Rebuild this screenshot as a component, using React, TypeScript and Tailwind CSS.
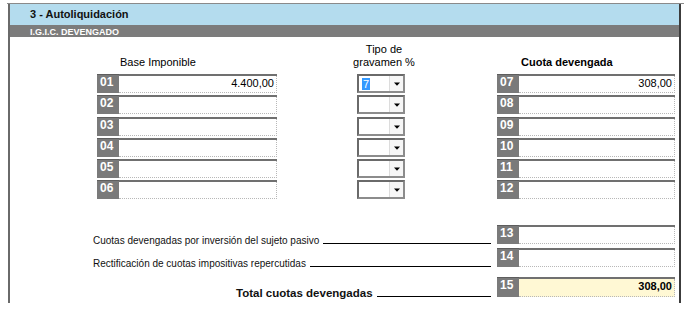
import React from "react";

const rowGaps = ["", "mt-[2px]", "mt-[3px]", "mt-[2px]", "mt-[2px]", "mt-[2px]"];

function Label({ n, h = "h-[19px]" }: { n: string; h?: string }) {
  return (
    <div className={`w-[22px] ${h} bg-[#7a7a7a] border-t border-[#5e5e5e] text-white font-bold text-[12px] leading-[13px] pl-[3px] pt-px`}>
      {n}
    </div>
  );
}

function Field({
  n,
  value,
  width,
  h = "h-[19px]",
  yellow = false,
  bold = false,
}: {
  n: string;
  value?: string;
  width: string;
  h?: string;
  yellow?: boolean;
  bold?: boolean;
}) {
  return (
    <div className={`flex ${h}`}>
      <Label n={n} h={h} />
      <div className={`${width} ${h} border-t-2 border-[#707070]`}>
        <div
          className={`h-full border-r border-b border-dotted border-[#b8b8b8] ${
            yellow ? "bg-[#fff8d4]" : "bg-white"
          } flex justify-end items-start pr-[2px] pt-px text-[11px] leading-[13px] ${
            bold ? "font-bold" : ""
          }`}
        >
          {value}
        </div>
      </div>
    </div>
  );
}

function Select({ value }: { value?: string }) {
  return (
    <div className="w-[48px] h-[19px] border-2 border-[#8c8c8c] border-t-[#6a6a6a] border-l-[#6a6a6a] flex bg-white">
      <div className="flex-1 flex items-center pl-[3px]">
        {value && (
          <span className="bg-[#3399ff] text-white text-[11px] leading-[12px] px-px">{value}</span>
        )}
      </div>
      <div className="w-[14px] border-l border-[#dcdcdc] bg-[#f6f6f6] flex items-center justify-center">
        <svg width="6" height="4" viewBox="0 0 6 4">
          <path d="M0 0.5h6L3 3.8z" fill="#000" />
        </svg>
      </div>
    </div>
  );
}

function LineRow({
  text,
  bold = false,
  pl = "",
  n,
  value,
  h = "h-[19px]",
  yellow = false,
}: {
  text: string;
  bold?: boolean;
  pl?: string;
  n: string;
  value?: string;
  h?: string;
  yellow?: boolean;
}) {
  return (
    <div className="flex items-end">
      <div className={`w-[398px] flex items-end ${pl}`}>
        <span
          className={`${
            bold ? "font-bold text-[11.5px] leading-[12px] -mb-[2px]" : "text-[10px] leading-[10px] -mb-[2px]"
          } text-[#111] whitespace-nowrap`}
        >
          {text}
        </span>
        <div className="flex-1 ml-[4px] h-px bg-black" />
      </div>
      <div className="ml-[6px]">
        <Field n={n} value={value} width="w-[156px]" h={h} yellow={yellow} bold={yellow} />
      </div>
    </div>
  );
}

export default function App() {
  const rows1 = [
    { n: "01", v: "4.400,00" },
    { n: "02" },
    { n: "03" },
    { n: "04" },
    { n: "05" },
    { n: "06" },
  ];
  const rows3 = [
    { n: "07", v: "308,00" },
    { n: "08" },
    { n: "09" },
    { n: "10" },
    { n: "11" },
    { n: "12" },
  ];
  return (
    <div className="w-[688px] h-[315px] bg-white overflow-hidden font-['Liberation_Sans',Arial,sans-serif] text-black">
      <div className="pt-[3px] pl-[7px]">
        <div className="w-[677px] h-px bg-[#8a8a8a]" />
        <div className="ml-px w-[673px] h-[299px] border-l-2 border-r-2 border-l-[#6a6a6a] border-r-[#3c3c3c]">
          <div className="h-[21px] bg-[#b4dcee] flex items-center pl-[20px] font-bold text-[11px] text-[#111]">
            3 - Autoliquidación
          </div>
          <div className="h-[12px] bg-[#7c7c7c] pl-[20px] text-white font-bold text-[9px] leading-[12px] pt-px">
            I.G.I.C. DEVENGADO
          </div>

          <div className="flex ml-[87px] pt-[6px]">
            <div className="w-[180px] flex flex-col">
              <div className="h-[26px] mb-[5px] flex items-end pl-[23px] text-[11px] leading-[13px]">
                Base Imponible
              </div>
              {rows1.map((r, i) => (
                <div key={r.n} className={rowGaps[i]}>
                  <Field n={r.n} value={r.v} width="w-[158px]" />
                </div>
              ))}
            </div>

            <div className="ml-[80px] w-[48px] flex flex-col">
              <div className="h-[26px] mb-[5px] -mx-[20px] pl-[6px] text-center text-[11px] leading-[13px]">
                Tipo de
                <br />
                gravamen %
              </div>
              {rows1.map((r, i) => (
                <div key={r.n} className={rowGaps[i]}>
                  <Select value={i === 0 ? "7" : undefined} />
                </div>
              ))}
            </div>

            <div className="ml-[92px] w-[178px] flex flex-col">
              <div className="h-[26px] mb-[5px] flex items-end pl-[24px] text-[11px] leading-[13px] font-bold">
                Cuota devengada
              </div>
              {rows3.map((r, i) => (
                <div key={r.n} className={rowGaps[i]}>
                  <Field n={r.n} value={r.v} width="w-[156px]" />
                </div>
              ))}
            </div>
          </div>

          <div className="ml-[83px] mt-[26px] flex flex-col">
            <LineRow text="Cuotas devengadas por inversión del sujeto pasivo" n="13" />
            <div className="mt-[4px]">
              <LineRow text="Rectificación de cuotas impositivas repercutidas" n="14" />
            </div>
            <div className="mt-[10px]">
              <LineRow
                text="Total cuotas devengadas"
                bold
                pl="pl-[143px]"
                n="15"
                value="308,00"
                h="h-[20px]"
                yellow
              />
            </div>
          </div>
        </div>
      </div>
    </div>
  );
}
